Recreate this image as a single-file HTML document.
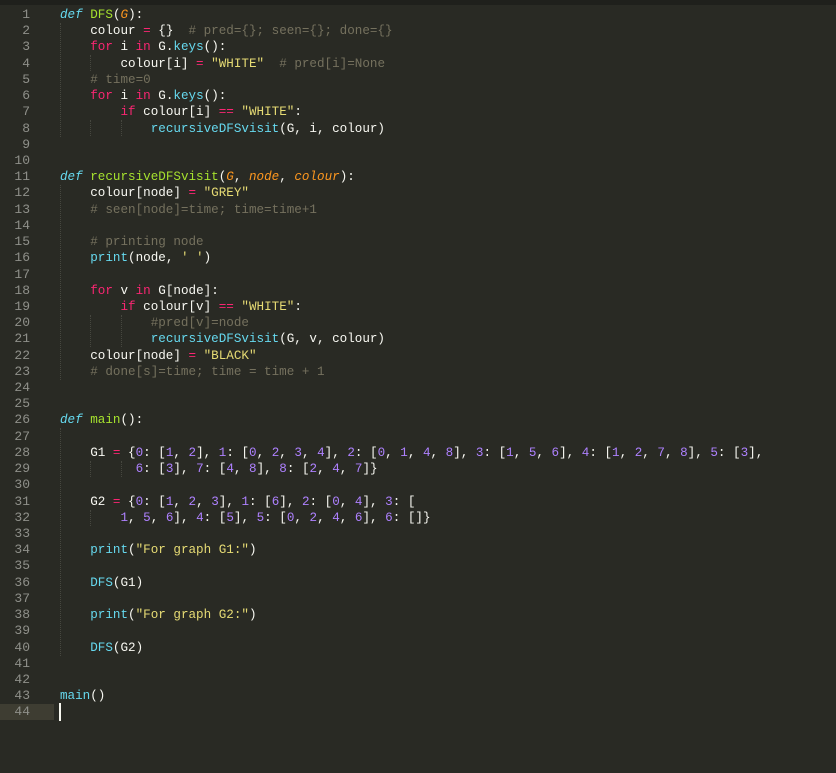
<!DOCTYPE html>
<html><head><meta charset="utf-8"><style>
html,body{margin:0;padding:0;}
body{width:836px;height:773px;background:#292a24;overflow:hidden;position:relative;font-family:"Liberation Mono",monospace;font-size:12.6px;}
.top{position:absolute;left:0;top:0;width:836px;height:5px;background:#1f201c;}
.g{position:absolute;left:0;top:7px;width:30px;text-align:right;color:#8f908a;font-size:13px;}
.c{position:absolute;left:60px;top:7px;color:#f8f8f2;}
.c div{white-space:pre;}
.g div,.c div{height:16.23px;line-height:16.23px;}
.hl{position:absolute;left:0;top:704px;width:54px;height:16.23px;background:#3e3d32;}
.cur{position:absolute;left:59px;top:703px;width:2px;height:18px;background:#f8f8f0;}
.ig{position:absolute;width:0;border-left:1px dotted #46473f;}
.k{color:#f92672}.d{color:#66d9ef;font-style:italic}.f{color:#a6e22e}.p{color:#fd971f;font-style:italic}
.s{color:#e6db74}.n{color:#ae81ff}.m{color:#75715e}.b{color:#66d9ef}
</style></head><body>
<div class="top"></div>
<div class="hl"></div>
<div class="ig" style="left:60px;top:23px;height:114px"></div>
<div class="ig" style="left:90px;top:55px;height:16px"></div>
<div class="ig" style="left:90px;top:120px;height:16px"></div>
<div class="ig" style="left:121px;top:120px;height:16px"></div>
<div class="ig" style="left:60px;top:185px;height:195px"></div>
<div class="ig" style="left:90px;top:315px;height:32px"></div>
<div class="ig" style="left:121px;top:315px;height:32px"></div>
<div class="ig" style="left:60px;top:428px;height:228px"></div>
<div class="ig" style="left:90px;top:461px;height:16px"></div>
<div class="ig" style="left:121px;top:461px;height:16px"></div>
<div class="ig" style="left:90px;top:510px;height:16px"></div>
<div class="g">
<div>1</div><div>2</div><div>3</div><div>4</div><div>5</div><div>6</div><div>7</div><div>8</div><div>9</div><div>10</div><div>11</div><div>12</div><div>13</div><div>14</div><div>15</div><div>16</div><div>17</div><div>18</div><div>19</div><div>20</div><div>21</div><div>22</div><div>23</div><div>24</div><div>25</div><div>26</div><div>27</div><div>28</div><div>29</div><div>30</div><div>31</div><div>32</div><div>33</div><div>34</div><div>35</div><div>36</div><div>37</div><div>38</div><div>39</div><div>40</div><div>41</div><div>42</div><div>43</div><div>44</div>
</div>
<div class="c">
<div><span class="d">def</span> <span class="f">DFS</span>(<span class="p">G</span>):</div>
<div>    colour <span class="k">=</span> {}  <span class="m"># pred={}; seen={}; done={}</span></div>
<div>    <span class="k">for</span> i <span class="k">in</span> G.<span class="b">keys</span>():</div>
<div>        colour[i] <span class="k">=</span> <span class="s">"WHITE"</span>  <span class="m"># pred[i]=None</span></div>
<div>    <span class="m"># time=0</span></div>
<div>    <span class="k">for</span> i <span class="k">in</span> G.<span class="b">keys</span>():</div>
<div>        <span class="k">if</span> colour[i] <span class="k">==</span> <span class="s">"WHITE"</span>:</div>
<div>            <span class="b">recursiveDFSvisit</span>(G, i, colour)</div>
<div> </div>
<div> </div>
<div><span class="d">def</span> <span class="f">recursiveDFSvisit</span>(<span class="p">G</span>, <span class="p">node</span>, <span class="p">colour</span>):</div>
<div>    colour[node] <span class="k">=</span> <span class="s">"GREY"</span></div>
<div>    <span class="m"># seen[node]=time; time=time+1</span></div>
<div> </div>
<div>    <span class="m"># printing node</span></div>
<div>    <span class="b">print</span>(node, <span class="s">' '</span>)</div>
<div> </div>
<div>    <span class="k">for</span> v <span class="k">in</span> G[node]:</div>
<div>        <span class="k">if</span> colour[v] <span class="k">==</span> <span class="s">"WHITE"</span>:</div>
<div>            <span class="m">#pred[v]=node</span></div>
<div>            <span class="b">recursiveDFSvisit</span>(G, v, colour)</div>
<div>    colour[node] <span class="k">=</span> <span class="s">"BLACK"</span></div>
<div>    <span class="m"># done[s]=time; time = time + 1</span></div>
<div> </div>
<div> </div>
<div><span class="d">def</span> <span class="f">main</span>():</div>
<div> </div>
<div>    G1 <span class="k">=</span> {<span class="n">0</span>: [<span class="n">1</span>, <span class="n">2</span>], <span class="n">1</span>: [<span class="n">0</span>, <span class="n">2</span>, <span class="n">3</span>, <span class="n">4</span>], <span class="n">2</span>: [<span class="n">0</span>, <span class="n">1</span>, <span class="n">4</span>, <span class="n">8</span>], <span class="n">3</span>: [<span class="n">1</span>, <span class="n">5</span>, <span class="n">6</span>], <span class="n">4</span>: [<span class="n">1</span>, <span class="n">2</span>, <span class="n">7</span>, <span class="n">8</span>], <span class="n">5</span>: [<span class="n">3</span>],</div>
<div>          <span class="n">6</span>: [<span class="n">3</span>], <span class="n">7</span>: [<span class="n">4</span>, <span class="n">8</span>], <span class="n">8</span>: [<span class="n">2</span>, <span class="n">4</span>, <span class="n">7</span>]}</div>
<div> </div>
<div>    G2 <span class="k">=</span> {<span class="n">0</span>: [<span class="n">1</span>, <span class="n">2</span>, <span class="n">3</span>], <span class="n">1</span>: [<span class="n">6</span>], <span class="n">2</span>: [<span class="n">0</span>, <span class="n">4</span>], <span class="n">3</span>: [</div>
<div>        <span class="n">1</span>, <span class="n">5</span>, <span class="n">6</span>], <span class="n">4</span>: [<span class="n">5</span>], <span class="n">5</span>: [<span class="n">0</span>, <span class="n">2</span>, <span class="n">4</span>, <span class="n">6</span>], <span class="n">6</span>: []}</div>
<div> </div>
<div>    <span class="b">print</span>(<span class="s">"For graph G1:"</span>)</div>
<div> </div>
<div>    <span class="b">DFS</span>(G1)</div>
<div> </div>
<div>    <span class="b">print</span>(<span class="s">"For graph G2:"</span>)</div>
<div> </div>
<div>    <span class="b">DFS</span>(G2)</div>
<div> </div>
<div> </div>
<div><span class="b">main</span>()</div>
<div> </div>
</div>
<div class="cur"></div>
</body></html>
